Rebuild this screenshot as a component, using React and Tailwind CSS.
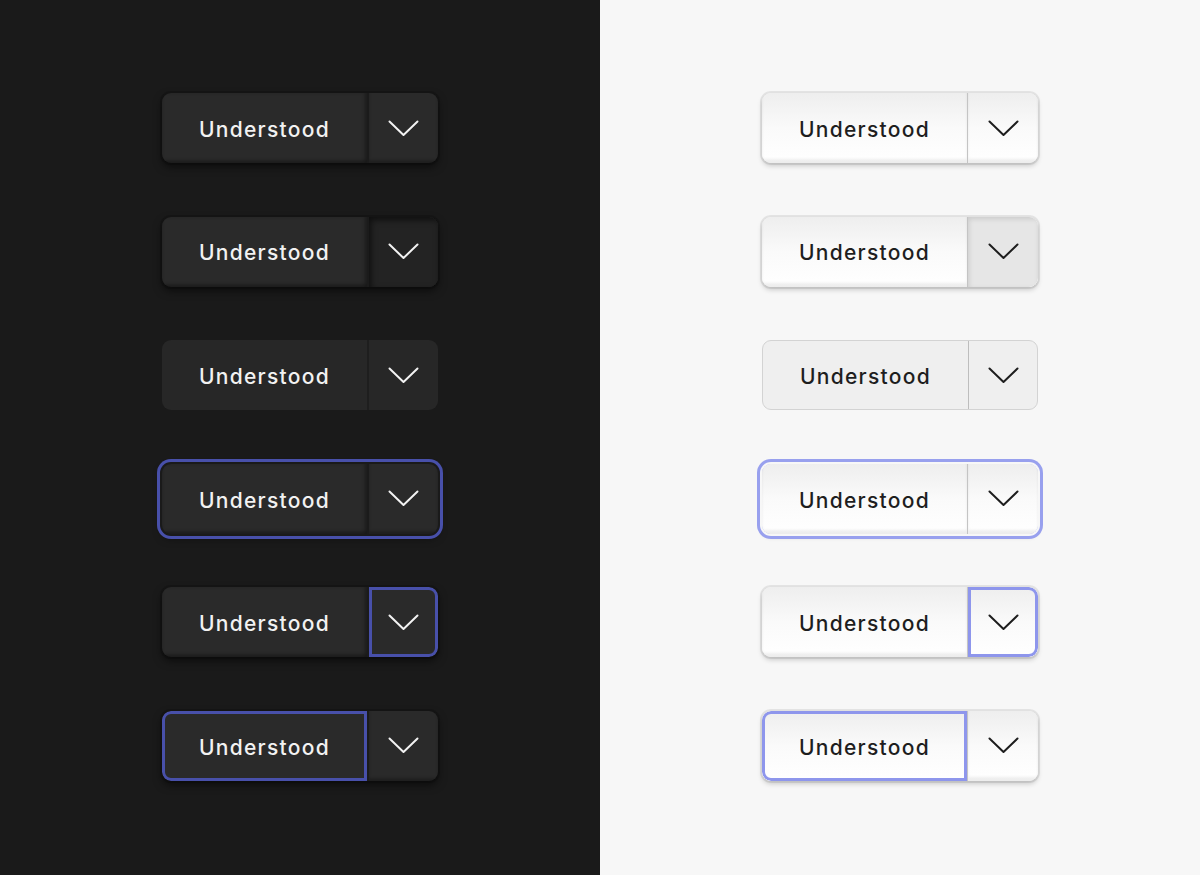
import React from "react";

const Chevron = ({ color }) => (
  <svg width="31" height="17" viewBox="0 0 31 17" fill="none">
    <path d="M1.5 1.5 L15.5 15 L29.5 1.5" stroke={color} strokeWidth="2" strokeLinecap="round" strokeLinejoin="round" />
  </svg>
);

const variants = ["default", "pressed", "flat", "focus", "focusArrow", "focusMain"];

const DarkButton = ({ variant }) => {
  const flat = variant === "flat";
  const outer =
    variant === "focus"
      ? "ring-[3px] ring-[#4850aa] ring-offset-2 ring-offset-[#1a1a1a]"
      : "";
  const shadow = flat
    ? "bg-[#272727]"
    : "bg-[#2a2a2a] shadow-[0_4px_8px_rgba(0,0,0,0.55),0_0_0_2px_#161616]";

  return (
    <div className={`flex h-[70px] w-[276px] rounded-[9px] overflow-hidden ${shadow} ${outer}`}>
      <div
        className={`flex w-[205px] items-center justify-center pt-[3px] text-[21px] font-medium tracking-[1.3px] text-[#f2f2f2] ${
          variant === "focusMain"
            ? "border-[3px] border-[#4850aa] rounded-l-[9px]"
            : flat
            ? ""
            : "shadow-[inset_0_-3px_3px_rgba(0,0,0,0.25),inset_-3px_0_3px_rgba(0,0,0,0.2)]"
        }`}
      >
        Understood
      </div>
      <div className={`w-[2px] ${flat ? "bg-[#1e1e1e]" : "bg-[#1b1b1b]"}`} />
      <div
        className={`flex flex-1 items-center justify-center ${
          variant === "pressed"
            ? "bg-[#232323] shadow-[inset_2px_3px_6px_rgba(0,0,0,0.6)]"
            : variant === "focusArrow"
            ? "border-[3px] border-[#4850aa] rounded-r-[9px]"
            : flat
            ? ""
            : "shadow-[inset_0_-3px_3px_rgba(0,0,0,0.25)]"
        }`}
      >
        <Chevron color="#f2f2f2" />
      </div>
    </div>
  );
};

const LightButton = ({ variant }) => {
  const flat = variant === "flat";
  const outer =
    variant === "focus"
      ? "ring-[3px] ring-[#98a0ee] ring-offset-2 ring-offset-[#f7f7f7]"
      : "";
  const shell = flat
    ? "bg-[#efefef] border border-[#d3d3d3]"
    : "bg-gradient-to-b from-[#eeeeee] via-[#fafafa] to-[#ffffff] shadow-[0_3px_5px_rgba(0,0,0,0.18),0_0_0_2px_#e4e4e4]";

  return (
    <div className={`flex h-[70px] w-[276px] rounded-[9px] overflow-hidden ${shell} ${outer}`}>
      <div
        className={`flex w-[205px] items-center justify-center pt-[3px] text-[21px] font-medium tracking-[1.3px] text-[#1e1e1e] ${
          variant === "focusMain"
            ? "border-[3px] border-[#8e96ec] rounded-l-[9px]"
            : flat
            ? ""
            : "shadow-[inset_0_-4px_3px_rgba(0,0,0,0.07)]"
        }`}
      >
        Understood
      </div>
      <div className={`w-px ${flat ? "bg-[#bdbdbd]" : "bg-[#c4c4c4]"}`} />
      <div
        className={`flex flex-1 items-center justify-center ${
          variant === "pressed"
            ? "bg-[#e6e6e6] shadow-[inset_1px_2px_5px_rgba(0,0,0,0.12)]"
            : variant === "focusArrow"
            ? "border-[3px] border-[#8e96ec] rounded-r-[9px]"
            : flat
            ? ""
            : "shadow-[inset_0_-4px_3px_rgba(0,0,0,0.07)]"
        }`}
      >
        <Chevron color="#1e1e1e" />
      </div>
    </div>
  );
};

export default function App() {
  return (
    <div
      className="flex h-[875px] w-[1200px]"
      style={{ fontFamily: "Inter, 'Noto Sans', sans-serif" }}
    >
      <div className="flex w-1/2 flex-col items-center gap-[53.6px] bg-[#1a1a1a] pt-[93px]">
        {variants.map((v) => (
          <DarkButton key={v} variant={v} />
        ))}
      </div>
      <div className="flex w-1/2 flex-col items-center gap-[53.6px] bg-[#f7f7f7] pt-[93px]">
        {variants.map((v) => (
          <LightButton key={v} variant={v} />
        ))}
      </div>
    </div>
  );
}
